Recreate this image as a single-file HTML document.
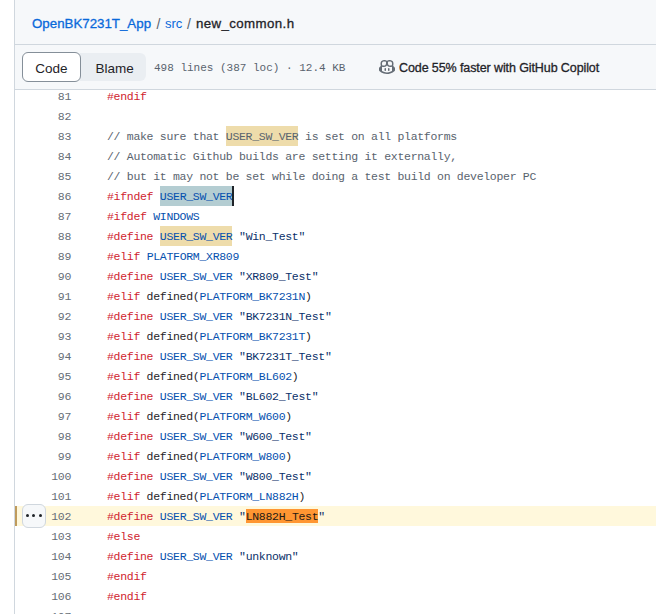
<!DOCTYPE html>
<html><head><meta charset="utf-8"><style>
html,body{margin:0;padding:0;}
body{width:656px;height:614px;overflow:hidden;background:#fff;position:relative;font-family:"Liberation Sans",sans-serif;color:#1f2328;}
.vline{position:absolute;left:14px;top:0;width:1px;height:614px;background:#d0d7de;z-index:5;}
.hdr1{position:absolute;left:15px;top:0;width:641px;height:44px;background:#f6f8fa;border-bottom:1px solid #d0d7de;z-index:3;}
.hdr2{position:absolute;left:15px;top:45px;width:641px;height:44px;background:#f6f8fa;border-bottom:1px solid #d0d7de;z-index:3;}
.cr{position:absolute;top:16px;font-size:13px;line-height:16px;white-space:nowrap;}
.cr.a{color:#0969da;}
.cr.sep{color:#59636e;font-size:14px;}
.cr.file{color:#1f2328;}
.sb{-webkit-text-stroke:0.3px currentColor;}
.track{position:absolute;left:7px;top:8px;width:124px;height:28px;background:#eaeef2;border-radius:6px;}
.knob{position:absolute;left:7px;top:7px;width:57px;height:28px;background:#fff;border:1px solid #858f99;border-radius:6px;}
.btxt{position:absolute;font-size:13.5px;line-height:16px;top:16px;white-space:nowrap;}
.info{position:absolute;left:139px;top:15px;font-family:"Liberation Mono",monospace;font-size:11px;line-height:16px;color:#59636e;white-space:nowrap;}
.cop{position:absolute;left:364px;top:14px;width:16px;height:16px;}
.coptxt{position:absolute;left:384px;top:15px;font-size:12.5px;line-height:16px;letter-spacing:-0.1px;-webkit-text-stroke:0.3px currentColor;color:#1f2328;white-space:nowrap;}
.ln{position:absolute;left:0;width:656px;height:20px;font-family:"Liberation Mono",monospace;font-size:11.5px;letter-spacing:-0.3px;line-height:20px;white-space:pre;}
.num{position:absolute;right:585px;top:1px;color:#656d76;}
.code{position:absolute;left:107px;top:1px;}
.f{color:#1f1a14}.k{color:#cf222e}.c{color:#59636e}.b{color:#0550ae}.s{color:#0a3069}.d{color:#1f2328}
.hl{position:absolute;background:#eedcab;height:20px;}
.sel{position:absolute;background:#b4cdd2;height:20px;}
.caret{position:absolute;background:#1f2328;width:2px;height:20px;}
.row102{position:absolute;left:15px;top:506px;width:641px;height:20px;background:#fff8dc;}
.bar102{position:absolute;left:15px;top:506px;width:2px;height:20px;background:#bf9b5c;}
.find{position:absolute;left:246px;top:509px;width:72px;height:14px;background:#ff9632;}
.dots{position:absolute;left:22px;top:504px;width:22px;height:22px;border:1px solid #d0d7de;border-radius:6px;background:#f6f8fa;z-index:2;}
.dot{position:absolute;top:9px;width:3px;height:3px;border-radius:50%;background:#1f2328;}

</style></head><body>
<div class="row102"></div>
<div class="bar102"></div>
<div class="hl" style="left:226px;top:126px;width:72px;"></div>
<div class="sel" style="left:160px;top:186px;width:72px;"></div>
<div class="caret" style="left:232px;top:186px;"></div>
<div class="hl" style="left:160px;top:226px;width:72px;"></div>
<div class="find"></div>
<div class="dots"><div class="dot" style="left:3px"></div><div class="dot" style="left:9px"></div><div class="dot" style="left:16px"></div></div>
<div class="ln" style="top:86px"><span class="num">81</span><span class="code"><span class="k">#endif</span></span></div>
<div class="ln" style="top:106px"><span class="num">82</span><span class="code"></span></div>
<div class="ln" style="top:126px"><span class="num">83</span><span class="code"><span class="c">// make sure that USER_SW_VER is set on all platforms</span></span></div>
<div class="ln" style="top:146px"><span class="num">84</span><span class="code"><span class="c">// Automatic Github builds are setting it externally,</span></span></div>
<div class="ln" style="top:166px"><span class="num">85</span><span class="code"><span class="c">// but it may not be set while doing a test build on developer PC</span></span></div>
<div class="ln" style="top:186px"><span class="num">86</span><span class="code"><span class="k">#ifndef</span><span class="d"> </span><span class="b">USER_SW_VER</span></span></div>
<div class="ln" style="top:206px"><span class="num">87</span><span class="code"><span class="k">#ifdef</span><span class="d"> </span><span class="b">WINDOWS</span></span></div>
<div class="ln" style="top:226px"><span class="num">88</span><span class="code"><span class="k">#define</span><span class="d"> </span><span class="b">USER_SW_VER</span><span class="d"> </span><span class="s">&quot;Win_Test&quot;</span></span></div>
<div class="ln" style="top:246px"><span class="num">89</span><span class="code"><span class="k">#elif</span><span class="d"> </span><span class="b">PLATFORM_XR809</span></span></div>
<div class="ln" style="top:266px"><span class="num">90</span><span class="code"><span class="k">#define</span><span class="d"> </span><span class="b">USER_SW_VER</span><span class="d"> </span><span class="s">&quot;XR809_Test&quot;</span></span></div>
<div class="ln" style="top:286px"><span class="num">91</span><span class="code"><span class="k">#elif</span><span class="d"> defined(</span><span class="b">PLATFORM_BK7231N</span><span class="d">)</span></span></div>
<div class="ln" style="top:306px"><span class="num">92</span><span class="code"><span class="k">#define</span><span class="d"> </span><span class="b">USER_SW_VER</span><span class="d"> </span><span class="s">&quot;BK7231N_Test&quot;</span></span></div>
<div class="ln" style="top:326px"><span class="num">93</span><span class="code"><span class="k">#elif</span><span class="d"> defined(</span><span class="b">PLATFORM_BK7231T</span><span class="d">)</span></span></div>
<div class="ln" style="top:346px"><span class="num">94</span><span class="code"><span class="k">#define</span><span class="d"> </span><span class="b">USER_SW_VER</span><span class="d"> </span><span class="s">&quot;BK7231T_Test&quot;</span></span></div>
<div class="ln" style="top:366px"><span class="num">95</span><span class="code"><span class="k">#elif</span><span class="d"> defined(</span><span class="b">PLATFORM_BL602</span><span class="d">)</span></span></div>
<div class="ln" style="top:386px"><span class="num">96</span><span class="code"><span class="k">#define</span><span class="d"> </span><span class="b">USER_SW_VER</span><span class="d"> </span><span class="s">&quot;BL602_Test&quot;</span></span></div>
<div class="ln" style="top:406px"><span class="num">97</span><span class="code"><span class="k">#elif</span><span class="d"> defined(</span><span class="b">PLATFORM_W600</span><span class="d">)</span></span></div>
<div class="ln" style="top:426px"><span class="num">98</span><span class="code"><span class="k">#define</span><span class="d"> </span><span class="b">USER_SW_VER</span><span class="d"> </span><span class="s">&quot;W600_Test&quot;</span></span></div>
<div class="ln" style="top:446px"><span class="num">99</span><span class="code"><span class="k">#elif</span><span class="d"> defined(</span><span class="b">PLATFORM_W800</span><span class="d">)</span></span></div>
<div class="ln" style="top:466px"><span class="num">100</span><span class="code"><span class="k">#define</span><span class="d"> </span><span class="b">USER_SW_VER</span><span class="d"> </span><span class="s">&quot;W800_Test&quot;</span></span></div>
<div class="ln" style="top:486px"><span class="num">101</span><span class="code"><span class="k">#elif</span><span class="d"> defined(</span><span class="b">PLATFORM_LN882H</span><span class="d">)</span></span></div>
<div class="ln" style="top:506px"><span class="num">102</span><span class="code"><span class="k">#define</span><span class="d"> </span><span class="b">USER_SW_VER</span><span class="d"> </span><span class="s">&quot;</span><span class="f">LN882H_Test</span><span class="s">&quot;</span></span></div>
<div class="ln" style="top:526px"><span class="num">103</span><span class="code"><span class="k">#else</span></span></div>
<div class="ln" style="top:546px"><span class="num">104</span><span class="code"><span class="k">#define</span><span class="d"> </span><span class="b">USER_SW_VER</span><span class="d"> </span><span class="s">&quot;unknown&quot;</span></span></div>
<div class="ln" style="top:566px"><span class="num">105</span><span class="code"><span class="k">#endif</span></span></div>
<div class="ln" style="top:586px"><span class="num">106</span><span class="code"><span class="k">#endif</span></span></div>
<div class="ln" style="top:606px"><span class="num">107</span><span class="code"></span></div>
<div class="hdr1">
<span class="cr a sb" style="left:17px;font-size:13.3px">OpenBK7231T_App</span>
<span class="cr sep" style="left:141.5px">/</span>
<span class="cr a" style="left:150px">src</span>
<span class="cr sep" style="left:172px">/</span>
<span class="cr file sb" style="left:181px;font-size:13.3px;letter-spacing:0.38px">new_common.h</span>
</div>
<div class="hdr2">
<div class="track"></div>
<div class="knob"></div>
<div class="btxt" style="left:20.3px;">Code</div>
<div class="btxt" style="left:80.6px;">Blame</div>
<div class="info">498 lines (387 loc) · 12.4 KB</div>
<svg class="cop" viewBox="0 0 16 16" fill="#656d76"><path d="M7.998 15.035c-4.562 0-7.873-2.914-7.998-3.749V9.338c.085-.628.677-1.686 1.588-2.065.013-.07.024-.143.036-.218.029-.183.06-.384.126-.612-.201-.508-.254-1.084-.254-1.656 0-.87.128-1.769.693-2.484.579-.733 1.494-1.124 2.724-1.261 1.206-.134 2.262.034 2.944.765.05.053.096.108.139.165.044-.057.094-.112.143-.165.682-.731 1.738-.899 2.944-.765 1.23.137 2.145.528 2.724 1.261.566.715.693 1.614.693 2.484 0 .572-.053 1.148-.254 1.656.066.228.098.429.126.612.012.076.024.148.037.218.924.385 1.522 1.471 1.591 2.095v1.872c0 .766-3.351 3.795-8.002 3.795Zm0-1.485c2.28 0 4.584-1.11 5.002-1.433V7.862l-.023-.116c-.49.21-1.075.291-1.727.291-1.146 0-2.059-.327-2.71-.991A3.222 3.222 0 0 1 8 6.303a3.24 3.24 0 0 1-.544.743c-.65.664-1.563.991-2.71.991-.652 0-1.236-.081-1.727-.291l-.023.116v4.255c.419.323 2.722 1.433 5.002 1.433ZM6.762 2.83c-.193-.206-.637-.413-1.682-.297-1.019.113-1.479.404-1.713.7-.247.312-.369.789-.369 1.554 0 .793.129 1.171.308 1.371.162.181.519.379 1.442.379.853 0 1.339-.235 1.638-.54.315-.322.527-.827.617-1.553.117-.935-.037-1.395-.241-1.614Zm4.155-.297c-1.044-.116-1.488.091-1.681.297-.204.219-.359.679-.242 1.614.091.726.303 1.231.618 1.553.299.305.784.54 1.638.54.922 0 1.28-.198 1.442-.379.179-.2.308-.578.308-1.371 0-.765-.123-1.242-.37-1.554-.233-.296-.693-.587-1.713-.7Z"></path><path d="M6.25 9.037a.75.75 0 0 1 .75.75v1.501a.75.75 0 0 1-1.5 0V9.787a.75.75 0 0 1 .75-.75Zm4.25.75v1.501a.75.75 0 0 1-1.5 0V9.787a.75.75 0 0 1 1.5 0Z"></path></svg>
<div class="coptxt">Code 55% faster with GitHub Copilot</div>
</div>
<div class="vline"></div>

</body></html>
